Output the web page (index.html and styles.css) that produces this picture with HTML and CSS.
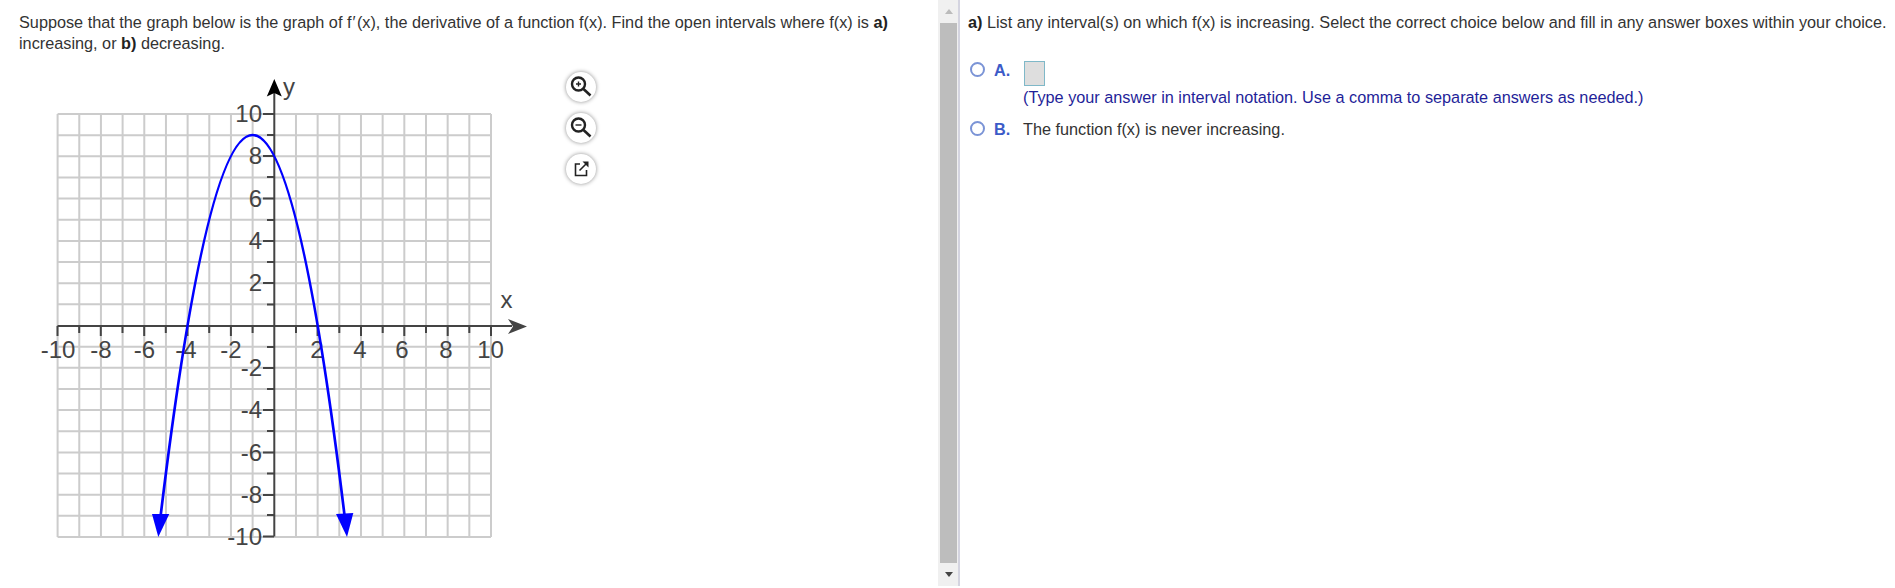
FILE: index.html
```html
<!DOCTYPE html>
<html lang="en">
<head>
  <meta charset="UTF-8" />
  <title>Derivative graph question</title>
  <link rel="stylesheet" href="styles.css">
</head>
<body>
  <div class="question-pane">
    <p class="question">Suppose that the graph below is the graph of f<span class="prime">&prime;</span>(x), the derivative of a function f(x). Find the open intervals where f(x) is <b>a)</b> increasing, or <b>b)</b> decreasing.</p>
    <div class="graph-row">
      <svg class="graph" viewBox="0 62 566 490" width="566" height="490">
        <g transform="translate(274.3 325.5) scale(21.67 21.15)">
          <path class="grid" d="M-10 -10V10M-9 -10V10M-8 -10V10M-7 -10V10M-6 -10V10M-5 -10V10M-4 -10V10M-3 -10V10M-2 -10V10M-1 -10V10M1 -10V10M2 -10V10M3 -10V10M4 -10V10M5 -10V10M6 -10V10M7 -10V10M8 -10V10M9 -10V10M10 -10V10"/>
          <path class="grid" d="M-10 -10H10M-10 -9H10M-10 -8H10M-10 -7H10M-10 -6H10M-10 -5H10M-10 -4H10M-10 -3H10M-10 -2H10M-10 -1H10M-10 1H10M-10 2H10M-10 3H10M-10 4H10M-10 5H10M-10 6H10M-10 7H10M-10 8H10M-10 9H10M-10 10H10"/>
        </g>
        <path class="axis" d="M57.5 326H512M274.3 92V536.5"/>
        <path class="axis" d="M57.5 326v10M100.8 326v10M144.2 326v10M187.5 326v10M230.9 326v10M317.6 326v10M361 326v10M404.3 326v10M447.7 326v10M491 326v10"/>
        <path class="axis" d="M79.2 326v7M122.5 326v7M165.8 326v7M209.2 326v7M252.6 326v7M296 326v7M339.3 326v7M382.7 326v7M426 326v7M469.3 326v7"/>
        <path class="axis" d="M263 114h11M263 156h11M263 198.500h11M263 241h11M263 283h11M263 368h11M263 410h11M263 452.500h11M263 495h11M263 536.500h11"/>
        <path class="axis" d="M267 135h7M267 177h7M267 220h7M267 262h7M267 304.500h7M267 347h7M267 389h7M267 431h7M267 473.500h7M267 515h7"/>
        <path class="arrow-y" d="M274.300 79 281.800 96.500 274.300 93 266.800 96.500Z"/>
        <path class="arrow-x" d="M527 326.500 508 319 513 326.500 508 334Z"/>
        <text class="axis-name" x="289" y="95" text-anchor="middle">y</text>
        <text class="axis-name" x="506.500" y="308" text-anchor="middle">x</text>
        <g class="tick-labels" text-anchor="middle">
          <text x="58" y="358">-10</text>
          <text x="101" y="358">-8</text>
          <text x="144.500" y="358">-6</text>
          <text x="186" y="358">-4</text>
          <text x="231" y="358">-2</text>
          <text x="317" y="358">2</text>
          <text x="360" y="358">4</text>
          <text x="402" y="358">6</text>
          <text x="446" y="358">8</text>
          <text x="490.500" y="358">10</text>
        </g>
        <g class="tick-labels" text-anchor="end">
          <text x="262" y="122">10</text>
          <text x="262" y="164">8</text>
          <text x="262" y="206.500">6</text>
          <text x="262" y="249">4</text>
          <text x="262" y="291">2</text>
          <text x="262" y="376">-2</text>
          <text x="262" y="418">-4</text>
          <text x="262" y="460.500">-6</text>
          <text x="262" y="503">-8</text>
          <text x="262" y="544.500">-10</text>
        </g>
        <path class="curve" d="M159.400 526Q252.600 -256 345.800 526" />
        <path class="curve-head" d="M152 514 169.300 514 158.300 537Z"/>
        <path class="curve-head" d="M336 514 353.300 513 347 537Z"/>
      </svg>
      <div class="tools">
        <button class="tool">
          <svg viewBox="0 0 30 30" width="30" height="30"><circle class="lens" cx="12.500" cy="12" r="6.500"/><path class="handle" d="M17.500 17 24.500 23.500"/><path class="mark" d="M10 12h5M12.500 9.500v5"/></svg>
        </button>
        <button class="tool">
          <svg viewBox="0 0 30 30" width="30" height="30"><circle class="lens" cx="12.500" cy="12" r="6.500"/><path class="handle" d="M17.500 17 24.500 23.500"/><path class="mark" d="M9.500 12h6"/></svg>
        </button>
        <button class="tool">
          <svg viewBox="0 0 30 30" width="30" height="30"><path class="box" d="M14 10H9.500V21.500H20.500V16"/><path class="box" d="M13.500 16.500 20.500 9.500"/><path class="tip" d="M16.500 7.500H22.500V13.500Z"/></svg>
        </button>
      </div>
    </div>
  </div>

  <div class="scrollbar">
    <div class="scroll-up"></div>
    <div class="scroll-thumb"></div>
    <div class="scroll-down"></div>
  </div>

  <div class="answer-pane">
    <p class="prompt"><b>a)</b> List any interval(s) on which f(x) is increasing. Select the correct choice below and fill in any answer boxes within your choice.</p>
    <div class="choice choice-a">
      <span class="radio"></span>
      <span class="choice-letter">A.</span>
      <div>
        <span class="answer-box"></span>
        <div class="hint">(Type your answer in interval notation. Use a comma to separate answers as needed.)</div>
      </div>
    </div>
    <div class="choice">
      <span class="radio"></span>
      <span class="choice-letter">B.</span>
      <div>The function f(x) is never increasing.</div>
    </div>
  </div>
</body>
</html>
```

FILE: styles.css
```css
body {
  margin: 0;
  height: 588px;
  display: flex;
  overflow: hidden;
  background: #fff;
  color: #333;
  font-family: "Liberation Sans", Arial, sans-serif;
  font-size: 16.25px;
  line-height: 21px;
}

b { color: #222; }

.question-pane {
  width: 938px;
  flex-shrink: 0;
}

.question {
  margin: 0;
  padding: 12px 0 0 19px;
  width: 880px;
  height: 50px;
}

.prime {
  margin: 0 1.4px 0 1px;
}

.graph-row {
  display: flex;
  align-items: flex-start;
}

.graph { display: block; }

.grid {
  fill: none;
  stroke: #ccc;
  stroke-width: 2px;
  vector-effect: non-scaling-stroke;
}

.axis {
  fill: none;
  stroke: #444;
  stroke-width: 2px;
}

.arrow-y { fill: #000; }
.arrow-x { fill: #444; }

.tick-labels text,
.axis-name {
  fill: #444;
  font-size: 24px;
}

.curve {
  fill: none;
  stroke: #00f;
  stroke-width: 2.7px;
}

.curve-head { fill: #00f; }

.tools {
  display: flex;
  flex-direction: column;
  gap: 11px;
  padding-top: 10px;
}

.tool {
  width: 30px;
  height: 30px;
  padding: 0;
  border: none;
  border-radius: 50%;
  background: #fff;
  box-shadow: 0 0 4px rgba(0,0,0,0.45);
}

.tool svg { display: block; }

.lens, .handle, .mark, .box {
  fill: none;
  stroke: #222;
}

.lens { stroke-width: 2.4px; }
.handle { stroke-width: 2.6px; }
.mark { stroke-width: 1.4px; }
.box { stroke-width: 1.6px; }
.tip { fill: #222; }

.scrollbar {
  width: 22px;
  height: 586px;
  flex-shrink: 0;
  display: flex;
  flex-direction: column;
  align-items: center;
  box-sizing: border-box;
  background: #f0f0f0;
  border-right: 2px solid #d4d4e0;
  padding: 0 1px 0 2px;
}

.scroll-up, .scroll-down {
  width: 0;
  height: 0;
  border-left: 4.500px solid transparent;
  border-right: 4.500px solid transparent;
}

.scroll-up {
  margin: 9px 0 9px;
  border-bottom: 5px solid #bbb;
}

.scroll-thumb {
  flex: 1;
  width: 17px;
  background: #bdbdbd;
}

.scroll-down {
  margin: 9px 0 9px;
  border-top: 5px solid #444;
}

.answer-pane {
  flex: 1;
  padding: 12px 0 0 8px;
  white-space: nowrap;
}

.prompt {
  margin: 0 0 27px;
}

.choice {
  display: flex;
  align-items: flex-start;
}

.choice-a { height: 59px; }

.radio {
  width: 15px;
  height: 15px;
  margin: 2px 0 0 2px;
  box-sizing: border-box;
  border: 2px solid #7b94d6;
  border-radius: 50%;
  background: #fff;
}

.choice-letter {
  width: 29px;
  margin-left: 9px;
  color: #3c5bc8;
  font-weight: bold;
}

.answer-box {
  display: block;
  width: 21px;
  height: 25px;
  box-sizing: border-box;
  margin: 1px 0 0 1px;
  background: #dedede;
  border: 1px solid #7fb8c8;
}

.hint {
  margin-top: 1px;
  color: #1f1f99;
}
```
